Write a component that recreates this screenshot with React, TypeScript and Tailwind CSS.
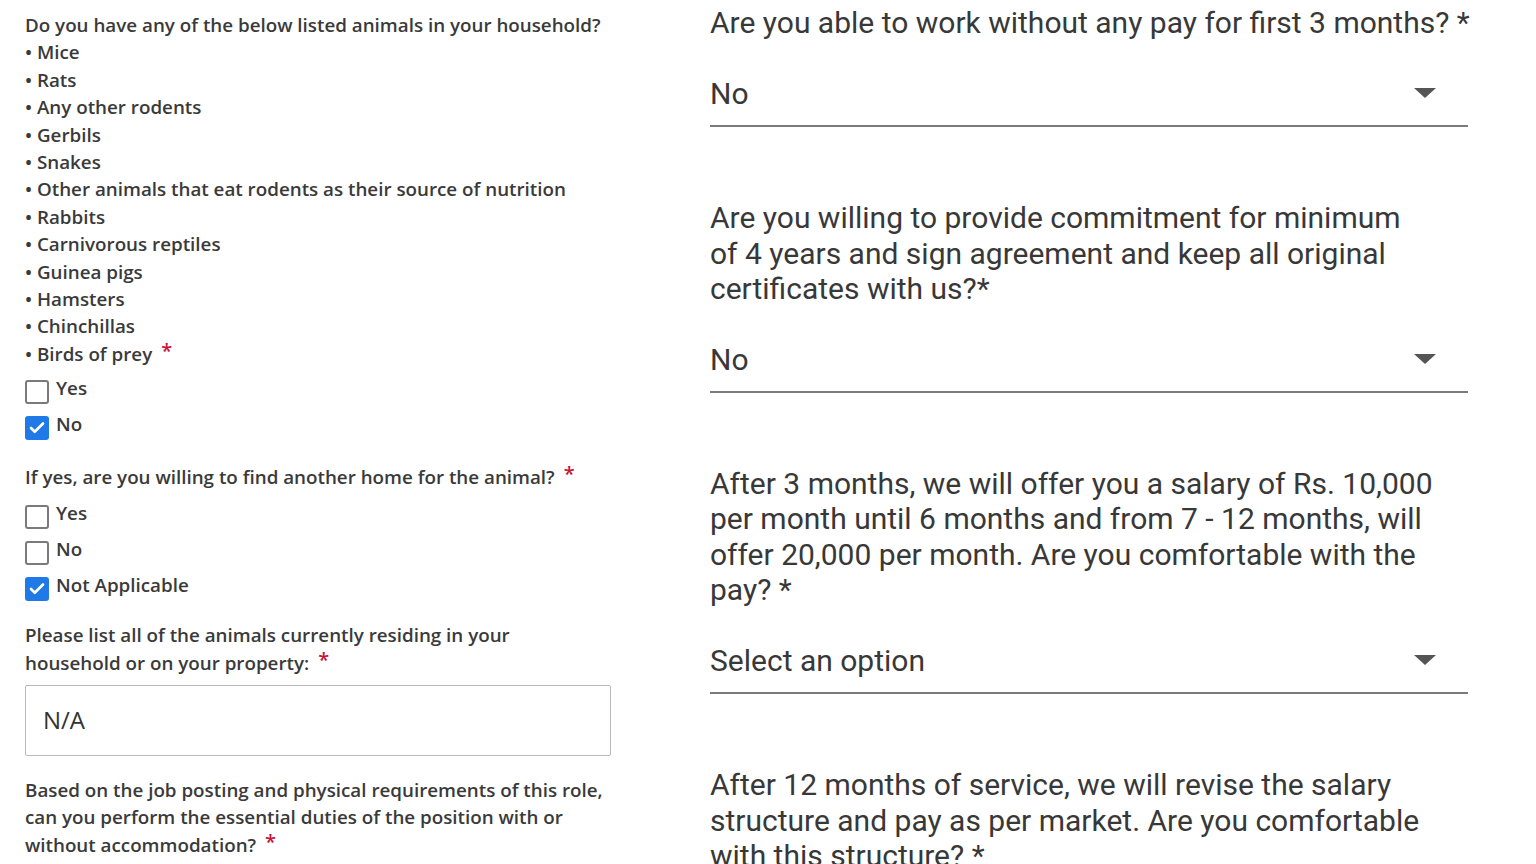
import { Check } from "lucide-react";

const animals = [
  "Mice",
  "Rats",
  "Any other rodents",
  "Gerbils",
  "Snakes",
  "Other animals that eat rodents as their source of nutrition",
  "Rabbits",
  "Carnivorous reptiles",
  "Guinea pigs",
  "Hamsters",
  "Chinchillas",
];

function Star() {
  return <span className="relative -top-[3px] ml-[9px] text-[20px] leading-none font-semibold text-[#c8133b]">*</span>;
}

function Box({ label, checked }: { label: string; checked?: boolean }) {
  return (
    <div className="flex h-[24px] items-start gap-[7px]">
      <span
        className={
          checked
            ? "flex h-[24px] w-[24px] items-center justify-center rounded-[3px] bg-[#1f7ae8] text-white"
            : "h-[24px] w-[24px] rounded-[3px] border-2 border-[#7a7a7a] bg-white"
        }
      >
        {checked && <Check size={18} strokeWidth={3.5} />}
      </span>
      <span className="-mt-[5px] leading-[27px]">{label}</span>
    </div>
  );
}

function Select({ value }: { value: string }) {
  return (
    <div className="mt-[21px] flex h-[66px] items-center justify-between border-b-2 border-[#7b7b7b] pr-[32px]">
      <span>{value}</span>
      <svg width="22" height="10" viewBox="0 0 22 10">
        <path d="M0 0h22L11 10z" fill="#555" />
      </svg>
    </div>
  );
}

const questions = [
  { lines: ["Are you able to work without any pay for first 3 months? *"], value: "No" },
  {
    lines: [
      "Are you willing to provide commitment for minimum",
      "of 4 years and sign agreement and keep all original",
      "certificates with us?*",
    ],
    value: "No",
  },
  {
    lines: [
      "After 3 months, we will offer you a salary of Rs. 10,000",
      "per month until 6 months and from 7 - 12 months, will",
      "offer 20,000 per month. Are you comfortable with the",
      "pay? *",
    ],
    value: "Select an option",
  },
  {
    lines: [
      "After 12 months of service, we will revise the salary",
      "structure and pay as per market. Are you comfortable",
      "with this structure? *",
    ],
    value: "",
  },
];

export default function App() {
  return (
    <div className="flex h-[864px] w-[1536px] overflow-hidden bg-white">
      <div
        className="w-[685px] shrink-0 pl-[25px] pt-[12px] text-[18.8px] leading-[27.4px] font-semibold text-[#3a3a3a]"
        style={{ fontFamily: '"Open Sans", sans-serif' }}
      >
        <p>Do you have any of the below listed animals in your household?</p>
        {animals.map((a) => (
          <p key={a}>• {a}</p>
        ))}
        <p>
          • Birds of prey
          <Star />
        </p>
        <div className="mt-[12px] flex flex-col gap-[12px]">
          <Box label="Yes" />
          <Box label="No" checked />
        </div>
        <p className="mt-[24px]">
          If yes, are you willing to find another home for the animal?
          <Star />
        </p>
        <div className="mt-[13px] flex flex-col gap-[12px]">
          <Box label="Yes" />
          <Box label="No" />
          <Box label="Not Applicable" checked />
        </div>
        <p className="mt-[20px] whitespace-nowrap leading-[28px]">
          Please list all of the animals currently residing in your
          <br />
          household or on your property:
          <Star />
        </p>
        <div className="mt-[8px] flex h-[71px] w-[586px] items-center rounded-[2px] border border-[#b9b9b9] pl-[17px] text-[24px] font-normal text-[#333]">
          N/A
        </div>
        <p className="mt-[21px] whitespace-nowrap leading-[27.5px]">
          Based on the job posting and physical requirements of this role,
          <br />
          can you perform the essential duties of the position with or
          <br />
          without accommodation?
          <Star />
        </p>
      </div>
      <div
        className="ml-[25px] w-[758px] pt-[5px] text-[30px] leading-[35.3px] text-[#383838]"
        style={{ fontFamily: "Roboto, sans-serif" }}
      >
        {questions.map((q) => (
          <div key={q.lines[0]} className="mb-[73px]">
            {q.lines.map((l) => (
              <p key={l} className="whitespace-nowrap">
                {l}
              </p>
            ))}
            {q.value && <Select value={q.value} />}
          </div>
        ))}
      </div>
    </div>
  );
}
